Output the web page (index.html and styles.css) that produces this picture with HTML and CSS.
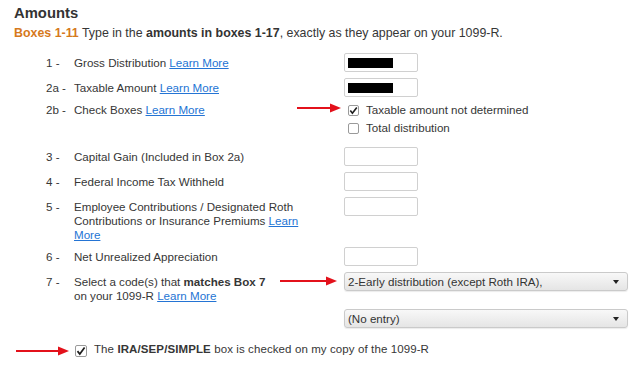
FILE: index.html
```html
<!DOCTYPE html>
<html>
<head>
<meta charset="utf-8">
<link rel="stylesheet" href="styles.css">
</head>
<body>
<div class="page">
  <h2 class="title">Amounts</h2>
  <p class="intro"><span class="boxes">Boxes 1-11</span> Type in the <b>amounts in boxes 1-17</b>, exactly as they appear on your 1099-R.</p>

  <div class="rows">
    <div class="row">
      <span class="num">1 -</span>
      <span class="label">Gross Distribution <a href="#">Learn More</a></span>
      <div class="ctrl"><span class="field"><span class="redact"></span></span></div>
    </div>
    <div class="row">
      <span class="num">2a -</span>
      <span class="label">Taxable Amount <a href="#">Learn More</a></span>
      <div class="ctrl"><span class="field"><span class="redact"></span></span></div>
    </div>
    <div class="row row-check">
      <span class="num">2b -</span>
      <span class="label">Check Boxes <a href="#">Learn More</a></span>
      <div class="ctrl">
        <div class="option">
          <span class="cb"><svg viewBox="0 0 11 11" width="11" height="11"><polyline points="2.3,5.6 4.4,8.3 8.8,2.4" fill="none" stroke="#1e1e1e" stroke-width="1.6"/></svg></span>
          <span>Taxable amount not determined</span>
        </div>
        <div class="option">
          <span class="cb"></span>
          <span>Total distribution</span>
        </div>
      </div>
      <svg class="arrow arrow-a" width="44" height="10" viewBox="0 0 44 10"><line x1="0" y1="5" x2="36" y2="5" stroke="#e3111b" stroke-width="2"/><polygon points="33,0.5 44,5 33,9.5" fill="#e3111b"/></svg>
    </div>
    <div class="row">
      <span class="num">3 -</span>
      <span class="label">Capital Gain (Included in Box 2a)</span>
      <div class="ctrl"><span class="field"></span></div>
    </div>
    <div class="row">
      <span class="num">4 -</span>
      <span class="label">Federal Income Tax Withheld</span>
      <div class="ctrl"><span class="field"></span></div>
    </div>
    <div class="row row-multi">
      <span class="num">5 -</span>
      <span class="label">Employee Contributions / Designated Roth Contributions or Insurance Premiums <a href="#">Learn More</a></span>
      <div class="ctrl"><span class="field"></span></div>
    </div>
    <div class="row">
      <span class="num">6 -</span>
      <span class="label">Net Unrealized Appreciation</span>
      <div class="ctrl"><span class="field"></span></div>
    </div>
    <div class="row">
      <span class="num">7 -</span>
      <span class="label">Select a code(s) that <b>matches Box 7</b><br>on your 1099-R <a href="#">Learn More</a></span>
      <div class="ctrl">
        <div class="select"><span>2-Early distribution (except Roth IRA),</span><span class="caret"></span></div>
        <div class="select select-2"><span>(No entry)</span><span class="caret"></span></div>
      </div>
      <svg class="arrow arrow-b" width="57" height="10" viewBox="0 0 57 10"><line x1="0" y1="5" x2="49" y2="5" stroke="#e3111b" stroke-width="2"/><polygon points="46,0.5 57,5 46,9.5" fill="#e3111b"/></svg>
    </div>
  </div>

  <div class="ira">
    <span class="cb cb-lg"><svg viewBox="0 0 12 12" width="12" height="12"><polyline points="2.5,6.1 4.8,9 9.6,2.6" fill="none" stroke="#1e1e1e" stroke-width="1.7"/></svg></span>
    <span class="ira-text">The <b>IRA/SEP/SIMPLE</b> box is checked on my copy of the 1099-R</span>
    <svg class="arrow arrow-c" width="53" height="10" viewBox="0 0 53 10"><line x1="0" y1="5" x2="45" y2="5" stroke="#e3111b" stroke-width="2"/><polygon points="42,0.5 53,5 42,9.5" fill="#e3111b"/></svg>
  </div>
</div>
</body>
</html>
```

FILE: styles.css
```css
html, body {
  margin: 0;
  padding: 0;
  background: #ffffff;
}

body {
  font-family: "Liberation Sans", Arial, sans-serif;
  font-size: 11.6px;
  line-height: 13.5px;
  color: #363636;
}

.page {
  padding: 5px 14px 0 14px;
}

.title {
  margin: 0;
  font-size: 14.8px;
  line-height: 17px;
  font-weight: bold;
  color: #333333;
}

.intro {
  margin: 4px 0 0 0;
  font-size: 12.4px;
  line-height: 14px;
}

.intro b {
  color: #333333;
}

.boxes {
  color: #d6791c;
  font-weight: bold;
}

a {
  color: #2474d4;
  text-decoration: underline;
}

.rows {
  margin-top: 13px;
  padding-left: 32px;
}

.row {
  position: relative;
  display: grid;
  grid-template-columns: 28px 232px 1fr;
  align-items: start;
  margin-bottom: 6px;
}

.num,
.label {
  padding-top: 3px;
}

.row-multi .label {
  line-height: 14px;
}

.row-multi {
  margin-bottom: 5px;
}

.row-check {
  margin-bottom: 8px;
}

.row-check .num,
.row-check .label {
  padding-top: 0;
}

.ctrl {
  margin-left: 38px;
}

.field {
  display: block;
  box-sizing: border-box;
  width: 74px;
  height: 19px;
  padding: 4px 3px;
  border: 1px solid #d0d0d0;
  border-radius: 2px;
  background: #ffffff;
}

.redact {
  display: block;
  width: 45px;
  height: 10px;
  background: #000000;
}

.option {
  display: flex;
  align-items: flex-start;
  height: 18px;
  padding-left: 4px;
}

.cb {
  box-sizing: border-box;
  display: flex;
  align-items: center;
  justify-content: center;
  flex: none;
  width: 11px;
  height: 11px;
  margin-top: 1.5px;
  margin-right: 7px;
  border: 1px solid #9a9a9a;
  border-radius: 2px;
  background: #ffffff;
}

.cb svg {
  display: block;
  margin: -1px;
}

.cb-lg {
  width: 12px;
  height: 12px;
  margin-top: 3px;
}

.select {
  box-sizing: border-box;
  display: flex;
  align-items: center;
  justify-content: space-between;
  width: 284px;
  height: 19px;
  padding: 0 8px 0 3px;
  border: 1px solid #cacaca;
  border-radius: 3px;
  background: linear-gradient(#f8f8f8, #e5e5e5);
  box-shadow: 0 1px 1px rgba(0, 0, 0, 0.08);
  color: #333333;
}

.select-2 {
  margin-top: 18px;
}

.caret {
  width: 0;
  height: 0;
  border-left: 3px solid transparent;
  border-right: 3px solid transparent;
  border-top: 4px solid #222222;
}

.ira {
  position: relative;
  display: flex;
  align-items: flex-start;
  margin-top: 14px;
  padding-left: 61px;
}

.ira-text {
  font-size: 11.5px;
  letter-spacing: 0.1px;
  padding-top: 1px;
}

.arrow {
  position: absolute;
  display: block;
}

.arrow-a {
  left: 251px;
  top: 0px;
}

.arrow-b {
  left: 234px;
  top: 4px;
}

.arrow-c {
  left: 2px;
  top: 4px;
}
```
